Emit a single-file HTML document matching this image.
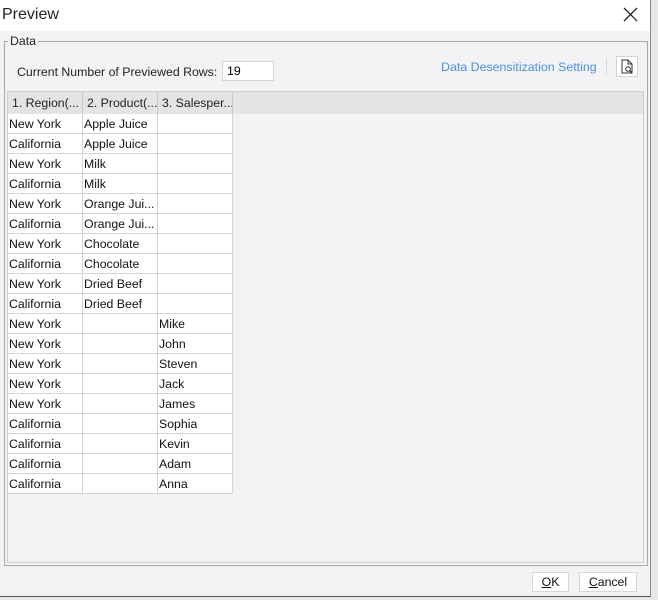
<!DOCTYPE html>
<html><head><style>
*{margin:0;padding:0;box-sizing:border-box}
body{width:658px;height:600px;overflow:hidden;background:#e8e8e8;font-family:"Liberation Sans",Arial,sans-serif;position:relative}
.dlg{position:absolute;left:0;top:0;width:651px;height:597px;background:#f3f3f5;border-right:1px solid #8a8a8a;border-bottom:1px solid #555}
.title{position:absolute;left:0;top:0;width:650px;height:31px;background:#fff}
.title span{position:absolute;left:2px;top:6px;font-size:16px;color:#222}
.x{position:absolute;left:623px;top:7px}
.fs{position:absolute;left:4px;top:41px;width:644px;height:525px;border:1px solid #a8a8a8}
.lg{position:absolute;left:8px;top:34px;background:#f3f3f5;padding:0 2px;font-size:12.3px;color:#222}
.lbl{position:absolute;left:17px;top:65px;font-size:12.3px;color:#222}
.inp{position:absolute;left:222px;top:61px;width:52px;height:20px;background:#fff;border:1px solid #d4d4d4;font-size:12.3px;padding:2px 0 0 4px}
.link{position:absolute;left:441px;top:60px;font-size:12.4px;color:#4a90e2}
.sep{position:absolute;left:606px;top:58px;width:1px;height:16px;background:#d6d6d6}
.ib{position:absolute;left:616px;top:56px;width:22px;height:21px;background:#fff;border:1px solid #d4d4d4}
.tbl{position:absolute;left:7px;top:91px;width:637px;height:472px;border:1px solid #cfcfcf;background:#f3f3f5}
.hdr{position:absolute;left:0;top:0;width:635px;height:22px;background:#e4e4e4}
.h{position:absolute;top:0;height:22px;font-size:12.3px;line-height:23px;padding-left:4px;color:#222;border-right:1px solid #c9c9c9;white-space:nowrap;overflow:hidden}
.row{position:absolute;left:0;height:20px}
.c{position:absolute;top:0;height:20px;background:#fff;border-right:1px solid #d4d4d4;border-bottom:1px solid #d4d4d4;font-size:12.3px;line-height:20px;padding-left:1px;color:#111;white-space:nowrap;overflow:hidden}
.btn{position:absolute;top:572px;height:20px;background:#fff;border:1px solid #d8d8d8;font-size:12.3px;text-align:center;line-height:19px;color:#111}
</style></head><body>
<div class="dlg">
<div class="title"><span>Preview</span>
<svg class="x" width="15" height="15" viewBox="0 0 15 15"><path d="M1 1L14 14M14 1L1 14" stroke="#222" stroke-width="1.3"/></svg></div>
<div class="fs"></div>
<div class="lg">Data</div>
<div class="lbl">Current Number of Previewed Rows:</div>
<div class="inp">19</div>
<div class="link">Data Desensitization Setting</div>
<div class="sep"></div>
<div class="ib"><svg width="20" height="19" viewBox="0 0 20 19"><path d="M5 3H11L15 7V16H5Z M11 3V7H15" fill="none" stroke="#333" stroke-width="1"/><circle cx="11" cy="12" r="2.3" fill="#fff" stroke="#333"/><path d="M12.7 13.7L15 16" stroke="#333" stroke-width="1.3"/></svg></div>
<div class="tbl">
<div class="hdr">
<div class="h" style="left:0;width:75px">1. Region(...</div>
<div class="h" style="left:75px;width:75px">2. Product(...</div>
<div class="h" style="left:150px;width:75px">3. Salesper...</div>
</div>
</div>
<div class="btn" style="left:532px;width:37px"><u>O</u>K</div>
<div class="btn" style="left:579px;width:58px"><u>C</u>ancel</div>
</div>
<div style="position:absolute;left:8px;top:114px">
<div class="row" style="top:0"><div class="c" style="left:0;width:75px">New York</div><div class="c" style="left:75px;width:75px">Apple Juice</div><div class="c" style="left:150px;width:75px"></div></div>
<div class="row" style="top:20px"><div class="c" style="left:0;width:75px">California</div><div class="c" style="left:75px;width:75px">Apple Juice</div><div class="c" style="left:150px;width:75px"></div></div>
<div class="row" style="top:40px"><div class="c" style="left:0;width:75px">New York</div><div class="c" style="left:75px;width:75px">Milk</div><div class="c" style="left:150px;width:75px"></div></div>
<div class="row" style="top:60px"><div class="c" style="left:0;width:75px">California</div><div class="c" style="left:75px;width:75px">Milk</div><div class="c" style="left:150px;width:75px"></div></div>
<div class="row" style="top:80px"><div class="c" style="left:0;width:75px">New York</div><div class="c" style="left:75px;width:75px">Orange Jui...</div><div class="c" style="left:150px;width:75px"></div></div>
<div class="row" style="top:100px"><div class="c" style="left:0;width:75px">California</div><div class="c" style="left:75px;width:75px">Orange Jui...</div><div class="c" style="left:150px;width:75px"></div></div>
<div class="row" style="top:120px"><div class="c" style="left:0;width:75px">New York</div><div class="c" style="left:75px;width:75px">Chocolate</div><div class="c" style="left:150px;width:75px"></div></div>
<div class="row" style="top:140px"><div class="c" style="left:0;width:75px">California</div><div class="c" style="left:75px;width:75px">Chocolate</div><div class="c" style="left:150px;width:75px"></div></div>
<div class="row" style="top:160px"><div class="c" style="left:0;width:75px">New York</div><div class="c" style="left:75px;width:75px">Dried Beef</div><div class="c" style="left:150px;width:75px"></div></div>
<div class="row" style="top:180px"><div class="c" style="left:0;width:75px">California</div><div class="c" style="left:75px;width:75px">Dried Beef</div><div class="c" style="left:150px;width:75px"></div></div>
<div class="row" style="top:200px"><div class="c" style="left:0;width:75px">New York</div><div class="c" style="left:75px;width:75px"></div><div class="c" style="left:150px;width:75px">Mike</div></div>
<div class="row" style="top:220px"><div class="c" style="left:0;width:75px">New York</div><div class="c" style="left:75px;width:75px"></div><div class="c" style="left:150px;width:75px">John</div></div>
<div class="row" style="top:240px"><div class="c" style="left:0;width:75px">New York</div><div class="c" style="left:75px;width:75px"></div><div class="c" style="left:150px;width:75px">Steven</div></div>
<div class="row" style="top:260px"><div class="c" style="left:0;width:75px">New York</div><div class="c" style="left:75px;width:75px"></div><div class="c" style="left:150px;width:75px">Jack</div></div>
<div class="row" style="top:280px"><div class="c" style="left:0;width:75px">New York</div><div class="c" style="left:75px;width:75px"></div><div class="c" style="left:150px;width:75px">James</div></div>
<div class="row" style="top:300px"><div class="c" style="left:0;width:75px">California</div><div class="c" style="left:75px;width:75px"></div><div class="c" style="left:150px;width:75px">Sophia</div></div>
<div class="row" style="top:320px"><div class="c" style="left:0;width:75px">California</div><div class="c" style="left:75px;width:75px"></div><div class="c" style="left:150px;width:75px">Kevin</div></div>
<div class="row" style="top:340px"><div class="c" style="left:0;width:75px">California</div><div class="c" style="left:75px;width:75px"></div><div class="c" style="left:150px;width:75px">Adam</div></div>
<div class="row" style="top:360px"><div class="c" style="left:0;width:75px">California</div><div class="c" style="left:75px;width:75px"></div><div class="c" style="left:150px;width:75px">Anna</div></div>
</div>
</body></html>
